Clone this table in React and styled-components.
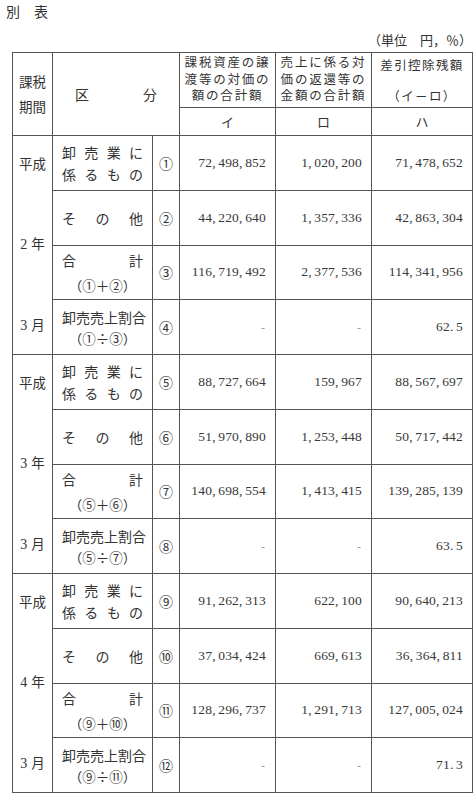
import React from "react";
import styled, { createGlobalStyle } from "styled-components";

const Global = createGlobalStyle`
  html, body {
    margin: 0;
    padding: 0;
    background: #fff;
  }
  body {
    font-family: "Liberation Serif", "Noto Sans CJK JP", serif;
    color: #333;
  }
`;

const Page = styled.div`
  width: 474px;
  height: 801px;
  box-sizing: border-box;
  padding: 2px 0 0 0;
  overflow: hidden;
`;

const Title = styled.div`
  font-family: "Noto Sans CJK JP", sans-serif;
  font-size: 14px;
  line-height: 18px;
  padding-left: 6px;
`;

const Unit = styled.div`
  font-family: "Noto Sans CJK JP", sans-serif;
  font-size: 13px;
  line-height: 18px;
  text-align: right;
  padding-right: 2px;
  margin-top: 11px;
  margin-bottom: 3px;
`;

const Sheet = styled.div`
  margin-left: 12px;
  display: grid;
  grid-template-columns: 40px 100px 27px 96px 96px 101px;
  grid-template-rows: 55px 28px repeat(12, 54.75px);
  width: max-content;
  border-top: 1px solid #555;
  border-left: 1px solid #555;
`;

const Cell = styled.div`
  border-right: 1px solid #555;
  border-bottom: 1px solid #555;
  box-sizing: border-box;
  min-width: 0;
  font-family: "Noto Sans CJK JP", sans-serif;
  font-size: 14px;
`;

const PeriodHead = styled(Cell)`
  grid-row: span 2;
  display: flex;
  flex-direction: column;
  align-items: center;
  justify-content: center;
  line-height: 25px;
  font-size: 13.5px;
`;

const KubunHead = styled(Cell)`
  grid-row: span 2;
  grid-column: span 2;
  display: flex;
  align-items: center;
  justify-content: space-between;
  padding: 0 22px 0 22px;
`;

const ColHead = styled(Cell)`
  display: flex;
  flex-direction: column;
  align-items: center;
  justify-content: ${(p) => (p.$spread ? "space-between" : "center")};
  padding: ${(p) => (p.$spread ? "4px 0 3px" : "0 0 2px")};
  font-size: 12.5px;
  line-height: 16.5px;
  letter-spacing: ${(p) => (p.$spread ? "1.4px" : "1.8px")};
`;

const SubHead = styled(Cell)`
  display: flex;
  align-items: center;
  justify-content: center;
  font-size: 13px;
`;

const PeriodCell = styled(Cell)`
  grid-row: span 4;
  display: flex;
  flex-direction: column;
  align-items: center;
  justify-content: space-between;
  padding: 18px 0 19px;
  font-size: 13.5px;
  line-height: 18px;
`;

const Digit = styled.span`
  font-family: "Liberation Serif", serif;
  font-size: 14px;
  margin-right: 4px;
`;

const LabelCell = styled(Cell)`
  display: flex;
  flex-direction: column;
  justify-content: center;
  gap: ${(p) => p.$gap || 0}px;
  padding: 0 9px;
  line-height: 18px;
`;

const Spread = styled.div`
  display: flex;
  justify-content: space-between;
`;

const Formula = styled.div`
  text-align: center;
  font-size: 13.5px;
`;

const NoCell = styled(Cell)`
  display: flex;
  align-items: center;
  justify-content: center;
  font-size: 14px;
`;

const NumCell = styled(Cell)`
  display: flex;
  align-items: center;
  justify-content: flex-end;
  padding-right: 9px;
  font-family: "Liberation Serif", serif;
  font-size: 13.5px;
  letter-spacing: 0.2px;
  color: #383838;
`;

const Comma = styled.span`
  margin-right: 2.5px;
`;

const Dash = styled.span`
  color: #888;
  font-size: 11px;
  margin-right: 1px;
`;

const circled = ["①", "②", "③", "④", "⑤", "⑥", "⑦", "⑧", "⑨", "⑩", "⑪", "⑫"];

const groups = [
  {
    year: "2",
    rows: [
      ["72,498,852", "1,020,200", "71,478,652"],
      ["44,220,640", "1,357,336", "42,863,304"],
      ["116,719,492", "2,377,536", "114,341,956"],
      ["-", "-", "62.5"],
    ],
  },
  {
    year: "3",
    rows: [
      ["88,727,664", "159,967", "88,567,697"],
      ["51,970,890", "1,253,448", "50,717,442"],
      ["140,698,554", "1,413,415", "139,285,139"],
      ["-", "-", "63.5"],
    ],
  },
  {
    year: "4",
    rows: [
      ["91,262,313", "622,100", "90,640,213"],
      ["37,034,424", "669,613", "36,364,811"],
      ["128,296,737", "1,291,713", "127,005,024"],
      ["-", "-", "71.3"],
    ],
  },
];

function Chars({ text }) {
  return (
    <Spread>
      {text.split("").map((c, i) => (
        <span key={i}>{c}</span>
      ))}
    </Spread>
  );
}

function Num({ value }) {
  if (value === "-") return <Dash>-</Dash>;
  const parts = value.split(/([,.])/);
  return (
    <span>
      {parts.map((p, i) =>
        p === "," || p === "." ? <Comma key={i}>{p}</Comma> : <span key={i}>{p}</span>
      )}
    </span>
  );
}

function Label({ kind, a, b, c }) {
  if (kind === 0)
    return (
      <LabelCell $gap={4}>
        <Chars text="卸売業に" />
        <Chars text="係るもの" />
      </LabelCell>
    );
  if (kind === 1)
    return (
      <LabelCell>
        <Chars text="その他" />
      </LabelCell>
    );
  if (kind === 2)
    return (
      <LabelCell $gap={7}>
        <Chars text="合計" />
        <Formula>（{a}＋{b}）</Formula>
      </LabelCell>
    );
  return (
    <LabelCell $gap={3}>
      <Chars text="卸売売上割合" />
      <Formula>（{a}÷{c}）</Formula>
    </LabelCell>
  );
}

export default function App() {
  return (
    <Page>
      <Global />
      <Title>別　表</Title>
      <Unit>（単位　円，％）</Unit>
      <Sheet>
        <PeriodHead>
          <span>課税</span>
          <span>期間</span>
        </PeriodHead>
        <KubunHead>
          <span>区</span>
          <span>分</span>
        </KubunHead>
        <ColHead>
          <span>課税資産の譲</span>
          <span>渡等の対価の</span>
          <span>額の合計額</span>
        </ColHead>
        <ColHead>
          <span>売上に係る対</span>
          <span>価の返還等の</span>
          <span>金額の合計額</span>
        </ColHead>
        <ColHead $spread>
          <span>差引控除残額</span>
          <span>（イ－ロ）</span>
        </ColHead>
        <SubHead>イ</SubHead>
        <SubHead>ロ</SubHead>
        <SubHead>ハ</SubHead>

        {groups.map((g, gi) => {
          const base = gi * 4;
          const [a, b, c] = [circled[base], circled[base + 1], circled[base + 2]];
          return (
            <React.Fragment key={gi}>
              <PeriodCell>
                <span>平成</span>
                <span>
                  <Digit>{g.year}</Digit>年
                </span>
                <span>
                  <Digit>3</Digit>月
                </span>
              </PeriodCell>
              {g.rows.map((r, ri) => (
                <React.Fragment key={ri}>
                  <Label kind={ri} a={a} b={b} c={c} />
                  <NoCell>{circled[base + ri]}</NoCell>
                  {r.map((v, vi) => (
                    <NumCell key={vi}>
                      <Num value={v} />
                    </NumCell>
                  ))}
                </React.Fragment>
              ))}
            </React.Fragment>
          );
        })}
      </Sheet>
    </Page>
  );
}
